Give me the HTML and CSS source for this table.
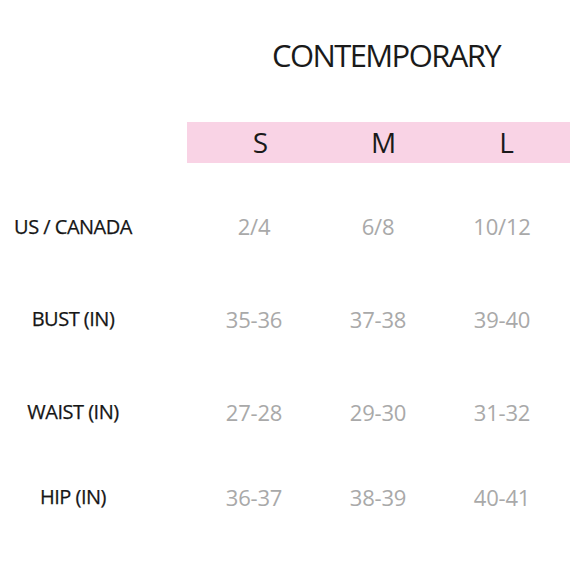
FILE: index.html
```html
<!DOCTYPE html>
<html>
<head>
<meta charset="utf-8">
<link rel="stylesheet" href="styles.css">
</head>
<body>
<div class="chart">
  <div class="title-row">
    <div class="title">CONTEMPORARY</div>
  </div>
  <div class="head-row">
    <div class="bar">
      <div class="size">S</div>
      <div class="size">M</div>
      <div class="size">L</div>
    </div>
  </div>
  <div class="rows">
    <div class="label">US / CANADA</div>
    <div class="val">2/4</div>
    <div class="val">6/8</div>
    <div class="val">10/12</div>

    <div class="label">BUST (IN)</div>
    <div class="val">35-36</div>
    <div class="val">37-38</div>
    <div class="val">39-40</div>

    <div class="label">WAIST (IN)</div>
    <div class="val">27-28</div>
    <div class="val">29-30</div>
    <div class="val">31-32</div>

    <div class="label">HIP (IN)</div>
    <div class="val">36-37</div>
    <div class="val">38-39</div>
    <div class="val">40-41</div>
  </div>
</div>
</body>
</html>
```
FILE: styles.css
```css
html, body {
  margin: 0;
  padding: 0;
  background: #ffffff;
}
body {
  width: 580px;
  height: 580px;
  font-family: "Open Sans", "Noto Sans", sans-serif;
}
.chart {
  display: flex;
  flex-direction: column;
}
.title-row {
  height: 122px;
  display: grid;
  grid-template-columns: 192px 372px;
}
.title {
  grid-column: 2;
  text-align: center;
  font-size: 31px;
  line-height: 40px;
  padding-top: 35px;
  color: #1a1a1a;
  letter-spacing: -1.6px;
  margin-left: 16px;
}
.head-row {
  display: grid;
  grid-template-columns: 187px 383px;
}
.bar {
  grid-column: 2;
  height: 41px;
  background: #f9d3e5;
  display: grid;
  grid-template-columns: repeat(3, 123px);
  padding-left: 12px;
  align-items: center;
}
.size {
  text-align: center;
  font-size: 28px;
  line-height: 41px;
  color: #1a1a1a;
}
.rows {
  margin-top: 17px;
  display: grid;
  grid-template-columns: 146px 46px repeat(3, 124px);
  grid-template-rows: 92px 93px 93px 77px;
  align-items: center;
}
.label {
  grid-column: 1;
  text-align: center;
  font-size: 20px;
  color: #161616;
  letter-spacing: -0.5px;
  -webkit-text-stroke: 0.25px #161616;
}
.val {
  text-align: center;
  font-size: 22px;
  color: #a9a9a9;
  letter-spacing: -0.2px;
}
.label + .val {
  grid-column: 3;
}
```
